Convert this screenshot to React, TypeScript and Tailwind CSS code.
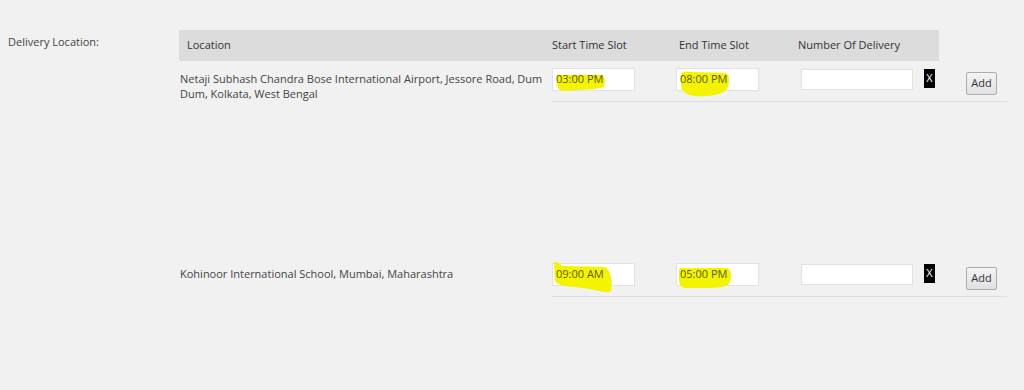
import React from "react";

type Row = {
  location: string[];
  start: string;
  end: string;
  startMark: string;
  endMark: string;
};

const rows: Row[] = [
  {
    location: [
      "Netaji Subhash Chandra Bose International Airport, Jessore Road, Dum",
      "Dum, Kolkata, West Bengal",
    ],
    start: "03:00 PM",
    end: "08:00 PM",
    startMark: "M4 8 C4 5 6 5 9 6 L48 6 C52 7 53 12 51 17 C49 21 30 20 12 22 C6 22 4 19 4 14 Z",
    endMark: "M4 5 C6 2 10 2 14 3 L49 4 C53 6 53 14 50 20 C46 26 30 28 18 27 C8 26 4 22 4 15 Z",
  },
  {
    location: ["Kohinoor International School, Mumbai, Maharashtra"],
    start: "09:00 AM",
    end: "05:00 PM",
    startMark: "M1 -2 C3 -3 6 0 10 2 L52 3 C58 6 60 18 58 27 C55 30 45 26 30 24 C14 22 3 22 2 16 Z",
    endMark: "M2 5 C4 3 8 4 12 4 L51 4 C55 7 55 17 51 21 C44 25 20 24 8 24 C3 23 2 20 2 14 Z",
  },
];

const TimeBox = ({ value, mark }: { value: string; mark: string }) => (
  <div className="relative h-[23px] w-[83px] border border-[#e2e2e2] bg-white">
    <svg
      className="absolute left-0 top-0 overflow-visible"
      width="83"
      height="23"
      viewBox="0 0 83 23"
    >
      <path d={mark} fill="#f4f400" />
    </svg>
    <span className="relative block pl-[3px] text-[11px] leading-[20px] text-[#5b5b10]">
      {value}
    </span>
  </div>
);

const DeliveryRow = ({ row, className }: { row: Row; className?: string }) => (
  <div className={`flex ${className ?? ""}`}>
    <div className="w-[373px] pl-[1px] pt-[10px] text-[11px] leading-[15px] text-[#444]">
      {row.location.map((line) => (
        <div key={line}>{line}</div>
      ))}
    </div>
    <div className="flex h-[41px] w-[455px] items-start border-b border-[#dedede] pt-[7px]">
      <div className="w-[124px]">
        <TimeBox value={row.start} mark={row.startMark} />
      </div>
      <div className="w-[125px]">
        <TimeBox value={row.end} mark={row.endMark} />
      </div>
      <div className="mt-[1px] h-[21px] w-[112px] border border-[#e2e2e2] bg-white" />
      <div className="ml-[11px] mt-[1px] flex h-[19px] w-[11px] items-center justify-center bg-black text-[11px] text-white">
        X
      </div>
      <button className="ml-[31px] mt-[4px] h-[23px] w-[31px] rounded-[2px] border border-[#acacac] bg-gradient-to-b from-[#f4f4f4] to-[#e1e1e1] text-[11px] text-[#333]">
        Add
      </button>
    </div>
  </div>
);

export default function App() {
  return (
    <div
      className="flex h-[390px] w-[1024px] bg-[#f1f1f1] pt-[30px]"
      style={{ fontFamily: '"Open Sans", "Noto Sans", sans-serif' }}
    >
      <div className="w-[179px] pl-[8px] pt-[4px] text-[11px] text-[#444]">
        Delivery Location:
      </div>
      <div>
        <div className="flex h-[31px] w-[760px] items-center bg-[#dcdcdc] text-[11px] text-[#333]">
          <div className="w-[373px] pl-[8px]">Location</div>
          <div className="w-[127px]">Start Time Slot</div>
          <div className="w-[119px]">End Time Slot</div>
          <div>Number Of Delivery</div>
        </div>
        <DeliveryRow row={rows[0]} />
        <DeliveryRow row={rows[1]} className="mt-[154px]" />
      </div>
    </div>
  );
}
